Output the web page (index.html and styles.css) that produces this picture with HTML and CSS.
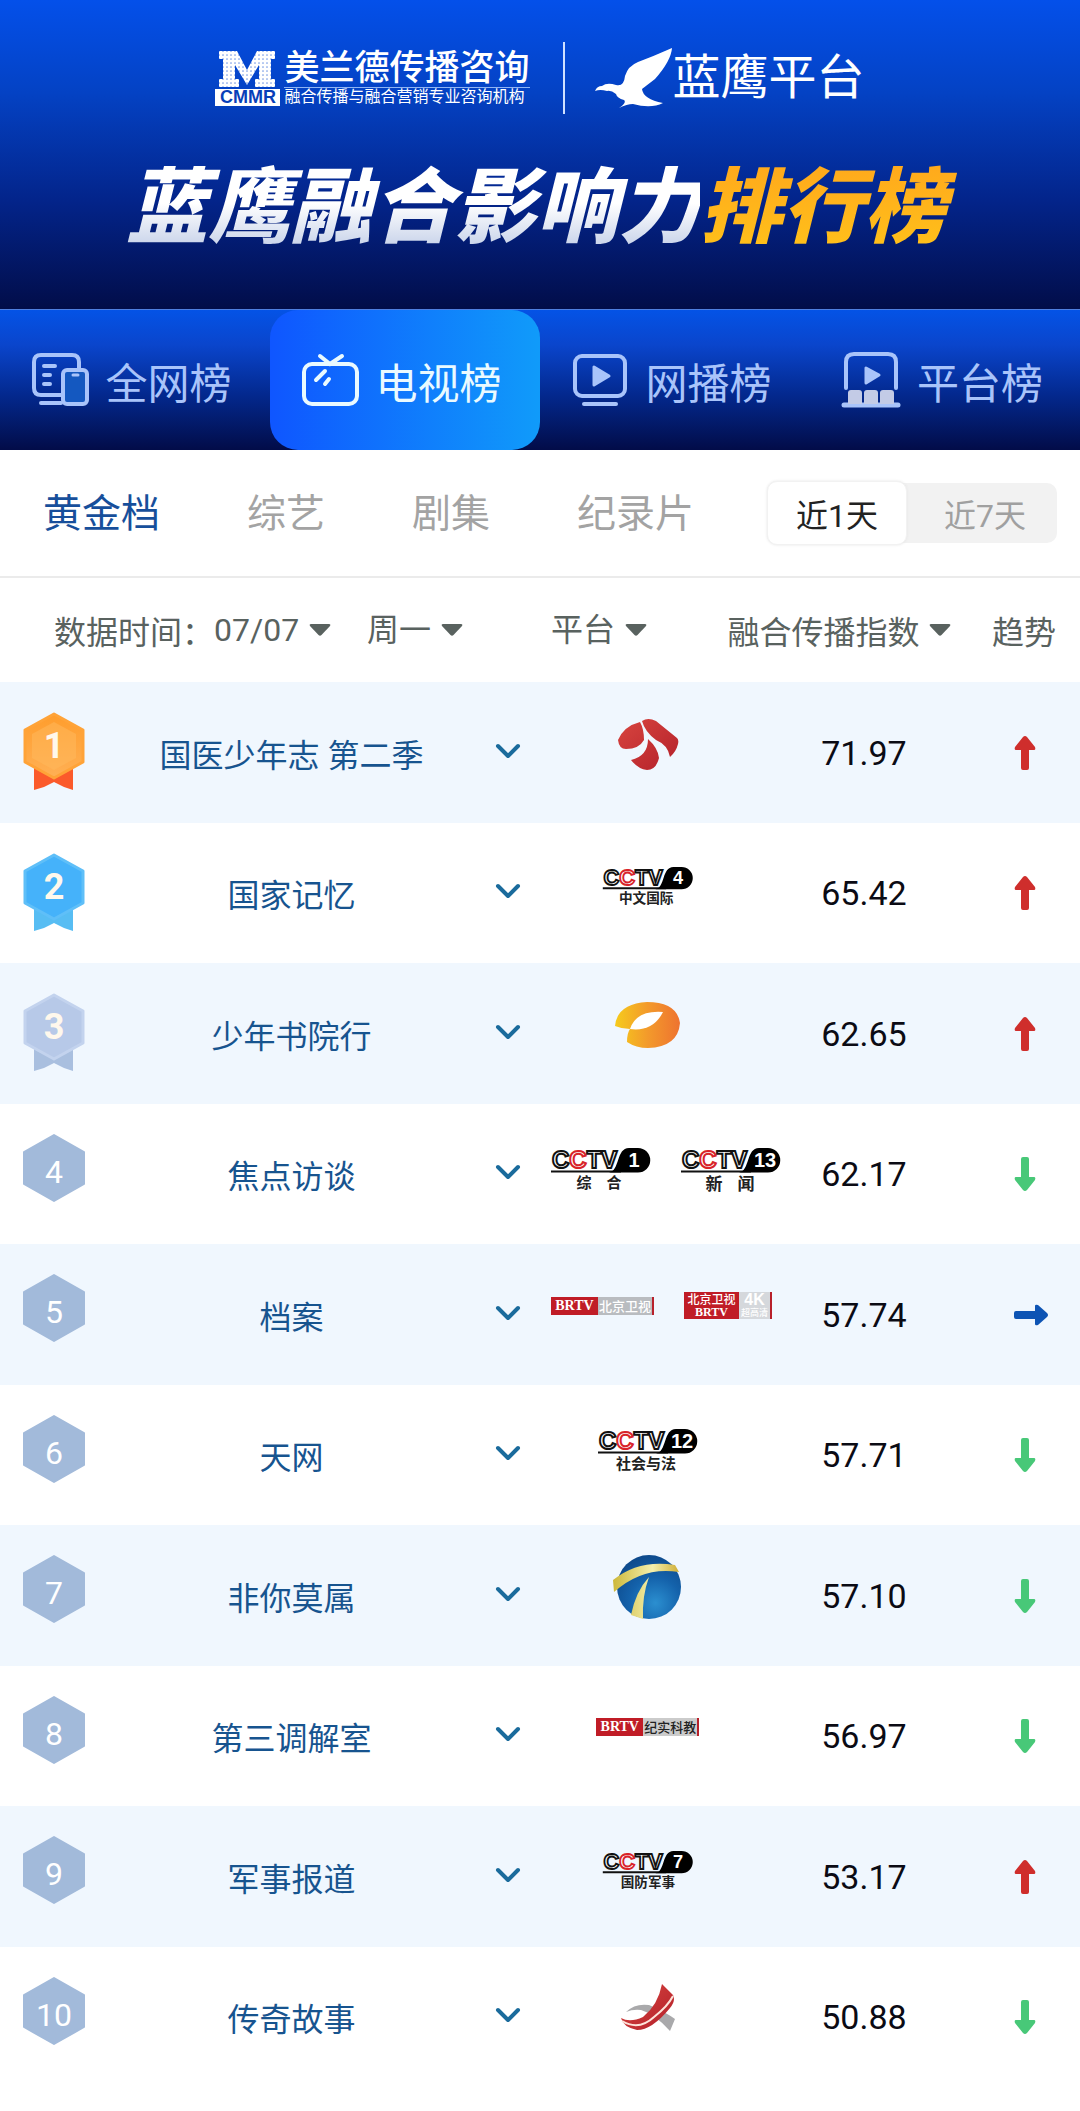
FILE: index.html
```html
<!DOCTYPE html>
<html lang="zh-CN">
<head>
  <meta charset="UTF-8"/>
  <title>蓝鹰融合影响力排行榜</title>
  <meta name="viewport" content="width=device-width,initial-scale=1"/>
  <link rel="stylesheet" href="styles.css">
</head>
<body>

  <!-- shared icons -->
  <svg class="defs" width="0" height="0" aria-hidden="true">
    <defs>
      <pattern id="dots" width="4" height="4" patternUnits="userSpaceOnUse">
        <circle cx="2" cy="2" r="2.200" fill="#fff"/>
      </pattern>
      <linearGradient id="gold" x1="0" y1="0" x2="0" y2="1"><stop offset="0" stop-color="#ff9d2c"/><stop offset="1" stop-color="#ffb055"/></linearGradient>
      <linearGradient id="red" x1="0" y1="0" x2="1" y2="1"><stop offset="0" stop-color="#d8453f"/><stop offset="1" stop-color="#b3202a"/></linearGradient>
      <linearGradient id="orange" x1="0" y1="0" x2="1" y2="0"><stop offset="0" stop-color="#f6cb1c"/><stop offset=".5" stop-color="#f39a2b"/><stop offset="1" stop-color="#ee7330"/></linearGradient>
      <radialGradient id="globe" cx=".6" cy=".75" r=".8"><stop offset="0" stop-color="#2b8fd0"/><stop offset=".5" stop-color="#1462ab"/><stop offset="1" stop-color="#0d4788"/></radialGradient>
      <linearGradient id="band" x1="0" y1="0" x2="1" y2="0"><stop offset="0" stop-color="#cdb83a"/><stop offset=".6" stop-color="#f4efac"/><stop offset="1" stop-color="#cfae36"/></linearGradient>
    </defs>
    <symbol id="caret" viewBox="0 0 22 14"><path d="M2 1h18q2 0 1 2l-8.500 9q-1.500 1.500-3 0L1 3Q0 1 2 1z" fill="currentColor"/></symbol>
    <symbol id="chevron" viewBox="0 0 26 16"><path d="M3 3l10 10L23 3" fill="none" stroke="currentColor" stroke-width="4" stroke-linecap="round" stroke-linejoin="round"/></symbol>
    <symbol id="arrow-up" viewBox="0 0 22 34"><path d="M11 0q1 0 2 1l8 10q1 3-1 3h-5v18q0 2-2 2H9q-2 0-2-2V14H2q-2 0-1-3L9 1q1-1 2-1z" fill="currentColor"/></symbol>
    <symbol id="arrow-down" viewBox="0 0 22 34"><path d="M11 34q1 0 2-1l8-10q1-3-1-3h-5V2q0-2-2-2H9Q7 0 7 2v18H2q-2 0-1 3l8 10q1 1 2 1z" fill="currentColor"/></symbol>
    <symbol id="hex" viewBox="0 0 62 68"><path d="M31 1L61 18v32L31 67 1 50V18z" fill="#a2bada" stroke="#a2bada" stroke-width="2" stroke-linejoin="round"/></symbol>
    <symbol id="plate" viewBox="0 0 100 28">
      <path d="M0 24.500h70" stroke="#111" stroke-width="2"/>
      <path d="M58 25.500C69 24 65 1 78 1h9a12 12 0 0 1 0 24.500z" fill="#000"/>
    </symbol>
  </svg>

  <header class="hero">
    <div class="brands">
      <div class="cmmr">
        <div class="cmmr-mark">
          <svg width="64" height="36" viewBox="0 0 64 36"><path d="M4 0h18l10 19L42 0h18v8h-4v20h4v8H40v-8h4V14L32 34 20 14v14h4v8H4v-8h4V8H4z" fill="url(#dots)"/></svg>
          <span class="cmmr-label">CMMR</span>
        </div>
        <div class="cmmr-text">
          <strong>美兰德传播咨询</strong>
          <small>融合传播与融合营销专业咨询机构</small>
        </div>
      </div>
      <div class="eagle">
        <svg width="78" height="60" viewBox="0 0 78 60"><path d="M77 0Q76 13 60 31L47 41q1 10 21 14Q56 61 38 56q-6 0-14 4 8-5 5-8-7-2-8-6-5-4-9-3-7-2-12 0 2-5 7-5 5-4 14-1 8 2 9-9Q33 18 43 14 59 8 77 0z" fill="#fff"/></svg>
        <span>蓝鹰平台</span>
      </div>
    </div>
    <h1><span class="title-main">蓝鹰融合影响力</span><span class="title-rank">排行榜</span></h1>
  </header>

  <nav class="tabs">
    <a href="#all">
      <svg width="57" height="54" viewBox="0 0 57 54" fill="none" stroke="currentColor" stroke-width="4" stroke-linecap="round"><path d="M29 42H9q-7 0-7-7V9q0-7 7-7h31q7 0 7 7v8M9 50h20M12 13h11M12 22h6M12 31h6"/><rect x="31" y="17" width="24" height="34" rx="4" fill="#1458c0"/><path d="M41 22h5" stroke-width="3"/></svg>
      全网榜
    </a>
    <a href="#tv" class="active">
      <svg width="57" height="54" viewBox="0 0 57 54" fill="none" stroke="currentColor" stroke-width="4" stroke-linecap="round"><rect x="2" y="11" width="53" height="40" rx="8"/><path d="M18 3l10 8L40 3M14 27l9-9M23 31l4-5"/></svg>
      电视榜
    </a>
    <a href="#web">
      <svg width="57" height="54" viewBox="0 0 57 54" fill="none" stroke="currentColor" stroke-width="4" stroke-linecap="round"><rect x="3" y="3" width="50" height="40" rx="7"/><path d="M12 51h32"/><path d="M22 14v18l15-9z" fill="currentColor" stroke-width="3" stroke-linejoin="round"/></svg>
      网播榜
    </a>
    <a href="#platform">
      <svg width="60" height="56" viewBox="0 0 60 56" fill="none" stroke="currentColor" stroke-width="4" stroke-linecap="round"><path d="M5 36V10q0-8 8-8h34q8 0 8 8v26"/><path d="M25 16v15l13-8z" fill="currentColor" stroke-width="3" stroke-linejoin="round"/><path d="M3 53h54" stroke-width="5"/><path d="M7 52V41q0-3 3-3h8q3 0 3 3v11zM23 52V41q0-3 3-3h8q3 0 3 3v11zM39 52V41q0-3 3-3h8q3 0 3 3v11z" fill="#c3cbe6" stroke="none"/></svg>
      平台榜
    </a>
  </nav>

  <div class="filters">
    <div class="cats">
      <a href="#prime" class="active">黄金档</a>
      <a href="#variety">综艺</a>
      <a href="#drama">剧集</a>
      <a href="#doc">纪录片</a>
    </div>
    <div class="range">
      <button type="button" class="active">近1天</button>
      <button type="button">近7天</button>
    </div>
  </div>

  <table class="rank">
    <colgroup>
      <col class="c-rank"><col class="c-name"><col class="c-more"><col class="c-plat"><col class="c-gap"><col class="c-score"><col>
    </colgroup>
    <thead>
      <tr>
        <th colspan="3">
          <div class="dates">
            <label for="day">数据时间：</label>
            <span class="pick"><select id="day"><option>07/07</option></select><svg><use href="#caret"/></svg></span>
            <span class="pick week"><select aria-label="星期"><option>周一</option></select><svg><use href="#caret"/></svg></span>
          </div>
        </th>
        <th class="th-plat"><span class="pick"><select aria-label="平台"><option>平台</option></select><svg><use href="#caret"/></svg></span></th>
        <th colspan="2" class="th-score"><button type="button" class="pick">融合传播指数<svg><use href="#caret"/></svg></button></th>
        <th class="th-trend">趋势</th>
      </tr>
    </thead>
    <tbody>
      <tr>
        <td class="pos"><svg width="62" height="80" viewBox="0 0 62 80"><path d="M11 54h39v24l-9-3-10-5-10 5-10 3z" fill="#fb5a2b"/><path d="M31 2l29 16v32L31 66 2 50V18z" fill="url(#gold)" stroke="#ffa338" stroke-width="3" stroke-linejoin="round"/><path d="M31 10l22 12v24L31 58 9 46V22z" fill="#ffb95e" opacity=".5"/><text x="31" y="46" class="medal">1</text></svg></td>
        <td><a href="#1">国医少年志 第二季</a></td>
        <td class="more"><button type="button" aria-label="展开"><svg><use href="#chevron"/></svg></button></td>
        <td colspan="2" class="plat"><div>
          <svg width="62" height="52" viewBox="0 0 62 52" fill="url(#red)"><path d="M23 4Q7 8 1 22q1 9 8 9 13 0 18-9Q27 11 23 4zM31 21q10 9 11 19-3 12-12 12-9-1-16-10Q31 38 31 21zM25 3q6-4 14 0l21 17q2 2 1 6-2 8-8 13-2-12-14-17Q28 14 25 3z"/></svg>
        </div></td>
        <td class="score">71.97</td>
        <td class="trend up"><svg><use href="#arrow-up"/></svg></td>
      </tr>
      <tr>
        <td class="pos"><svg width="62" height="80" viewBox="0 0 62 80"><path d="M11 54h39v24l-9-3-10-5-10 5-10 3z" fill="#57bdf3"/><path d="M31 2l29 16v32L31 66 2 50V18z" fill="#45b2fa" stroke="#5fbff8" stroke-width="3" stroke-linejoin="round"/><text x="31" y="46" class="medal">2</text></svg></td>
        <td><a href="#2">国家记忆</a></td>
        <td class="more"><button type="button" aria-label="展开"><svg><use href="#chevron"/></svg></button></td>
        <td colspan="2" class="plat"><div>
          <svg class="cctv short" viewBox="0 0 100 44"><text x="1" y="21" class="cc">C<tspan class="r">C</tspan>TV</text><use href="#plate" width="100" height="28"/><text x="83" y="20" class="ch">4</text><text x="48" y="41" class="sub">中文国际</text></svg>
        </div></td>
        <td class="score">65.42</td>
        <td class="trend up"><svg><use href="#arrow-up"/></svg></td>
      </tr>
      <tr>
        <td class="pos"><svg width="62" height="80" viewBox="0 0 62 80"><path d="M11 54h39v24l-9-3-10-5-10 5-10 3z" fill="#a9bfdf"/><path d="M31 2l29 16v32L31 66 2 50V18z" fill="#b7c9e8" stroke="#c3d3ee" stroke-width="3" stroke-linejoin="round"/><text x="31" y="46" class="medal">3</text></svg></td>
        <td><a href="#3">少年书院行</a></td>
        <td class="more"><button type="button" aria-label="展开"><svg><use href="#chevron"/></svg></button></td>
        <td colspan="2" class="plat"><div>
          <svg width="66" height="46" viewBox="0 0 66 46"><path d="M0 24Q2 2 32 0q30 0 33 21-2 24-32 25-12 0-21-6 0-9 3-13-8 0-15-3z" fill="url(#orange)"/><path d="M15 27Q21 8 48 10 38 30 15 27z" fill="#fff"/></svg>
        </div></td>
        <td class="score">62.65</td>
        <td class="trend up"><svg><use href="#arrow-up"/></svg></td>
      </tr>
      <tr>
        <td class="pos"><div class="badge"><svg><use href="#hex"/></svg><span>4</span></div></td>
        <td><a href="#4">焦点访谈</a></td>
        <td class="more"><button type="button" aria-label="展开"><svg><use href="#chevron"/></svg></button></td>
        <td colspan="2" class="plat pair"><div>
          <svg class="cctv" viewBox="0 0 100 44"><text x="1" y="21" class="cc">C<tspan class="r">C</tspan>TV</text><use href="#plate" width="100" height="28"/><text x="83" y="20" class="ch">1</text><text x="33" y="41" class="sub">综</text><text x="63" y="41" class="sub">合</text></svg>
          <svg class="cctv tall" viewBox="0 0 100 50"><text x="1" y="21" class="cc">C<tspan class="r">C</tspan>TV</text><use href="#plate" width="100" height="28"/><text x="84" y="20" class="ch">13</text><text x="33" y="43" class="sub big">新</text><text x="65" y="43" class="sub big">闻</text></svg>
        </div></td>
        <td class="score">62.17</td>
        <td class="trend down"><svg><use href="#arrow-down"/></svg></td>
      </tr>
      <tr>
        <td class="pos"><div class="badge"><svg><use href="#hex"/></svg><span>5</span></div></td>
        <td><a href="#5">档案</a></td>
        <td class="more"><button type="button" aria-label="展开"><svg><use href="#chevron"/></svg></button></td>
        <td colspan="2" class="plat pair"><div>
          <span class="brtv pale"><b>BRTV</b><i>北京卫视</i></span>
          <span class="brtv pale uhd"><b><em>北京卫视</em>BRTV</b><i>4K<small>超高清</small></i></span>
        </div></td>
        <td class="score">57.74</td>
        <td class="trend flat"><svg viewBox="0 0 34 22"><path d="M34 11q0-1-1-2L24 1q-3-1-3 1v5H2Q0 7 0 9v4q0 2 2 2h19v5q0 2 3 1l9-8q1-1 1-2z" fill="currentColor"/></svg></td>
      </tr>
      <tr>
        <td class="pos"><div class="badge"><svg><use href="#hex"/></svg><span>6</span></div></td>
        <td><a href="#6">天网</a></td>
        <td class="more"><button type="button" aria-label="展开"><svg><use href="#chevron"/></svg></button></td>
        <td colspan="2" class="plat"><div>
          <svg class="cctv" viewBox="0 0 100 44"><text x="1" y="21" class="cc">C<tspan class="r">C</tspan>TV</text><use href="#plate" width="100" height="28"/><text x="84" y="20" class="ch">12</text><text x="48" y="41" class="sub">社会与法</text></svg>
        </div></td>
        <td class="score">57.71</td>
        <td class="trend down"><svg><use href="#arrow-down"/></svg></td>
      </tr>
      <tr>
        <td class="pos"><div class="badge"><svg><use href="#hex"/></svg><span>7</span></div></td>
        <td><a href="#7">非你莫属</a></td>
        <td class="more"><button type="button" aria-label="展开"><svg><use href="#chevron"/></svg></button></td>
        <td colspan="2" class="plat"><div>
          <svg width="70" height="66" viewBox="0 0 70 66"><circle cx="36" cy="33" r="32" fill="url(#globe)"/><path d="M0 26Q26 5 62 11l4 7Q30 12 1 38zM36 23Q29 42 30 65l-12-4Q23 37 36 23z" fill="url(#band)"/></svg>
        </div></td>
        <td class="score">57.10</td>
        <td class="trend down"><svg><use href="#arrow-down"/></svg></td>
      </tr>
      <tr>
        <td class="pos"><div class="badge"><svg><use href="#hex"/></svg><span>8</span></div></td>
        <td><a href="#8">第三调解室</a></td>
        <td class="more"><button type="button" aria-label="展开"><svg><use href="#chevron"/></svg></button></td>
        <td colspan="2" class="plat"><div>
          <span class="brtv"><b>BRTV</b><i>纪实科教</i></span>
        </div></td>
        <td class="score">56.97</td>
        <td class="trend down"><svg><use href="#arrow-down"/></svg></td>
      </tr>
      <tr>
        <td class="pos"><div class="badge"><svg><use href="#hex"/></svg><span>9</span></div></td>
        <td><a href="#9">军事报道</a></td>
        <td class="more"><button type="button" aria-label="展开"><svg><use href="#chevron"/></svg></button></td>
        <td colspan="2" class="plat"><div>
          <svg class="cctv short" viewBox="0 0 100 44"><text x="1" y="21" class="cc">C<tspan class="r">C</tspan>TV</text><use href="#plate" width="100" height="28"/><text x="83" y="20" class="ch">7</text><text x="50" y="41" class="sub">国防军事</text></svg>
        </div></td>
        <td class="score">53.17</td>
        <td class="trend up"><svg><use href="#arrow-up"/></svg></td>
      </tr>
      <tr>
        <td class="pos"><div class="badge"><svg><use href="#hex"/></svg><span>10</span></div></td>
        <td><a href="#10">传奇故事</a></td>
        <td class="more"><button type="button" aria-label="展开"><svg><use href="#chevron"/></svg></button></td>
        <td colspan="2" class="plat"><div>
          <svg width="54" height="48" viewBox="0 0 54 48"><path d="M5 28Q14 19 28 21q18 8 26 14l-5 12Q34 30 20 26 12 25 5 28z" fill="#a9a9ab"/><path d="M41 0l11 11q3 6-3 13Q31 46 16 46 2 43 0 34q9 5 22-1Q37 21 41 0z" fill="url(#red)"/><path d="M1 37q17 10 32-4Q47 22 52 12" fill="none" stroke="#fde3da" stroke-width="2"/></svg>
        </div></td>
        <td class="score">50.88</td>
        <td class="trend down"><svg><use href="#arrow-down"/></svg></td>
      </tr>
    </tbody>
  </table>

</body>
</html>
```
FILE: styles.css
```css
*{box-sizing:border-box;}
body{margin:0;background:#fff;color:#0b0b14;font-family:Roboto,"Noto Sans CJK SC",sans-serif;font-size:32px;}
a{color:inherit;text-decoration:none;}
button,select{font:inherit;color:inherit;background:none;border:none;padding:0;margin:0;cursor:pointer;}
select{appearance:none;}
svg{display:block;flex:none;}
.defs{position:absolute;}

/* hero */
.hero{background:linear-gradient(#0450ea 0%,#0442c4 30%,#03248a 65%,#020d49 100%);color:#fff;padding:42px 0 53px;}
.brands{display:flex;justify-content:center;align-items:center;height:72px;}
.cmmr{display:flex;gap:4px;padding-right:33px;}
.cmmr-mark{display:flex;flex-direction:column;gap:2px;width:65px;}
.cmmr-label{background:#fff;color:#0840b8;font:700 18px/17px "Liberation Sans",sans-serif;text-align:center;}
.cmmr-text{display:flex;flex-direction:column;}
.cmmr-text strong{font-size:35px;line-height:36px;font-weight:500;border-bottom:1px solid #8fb4f4;}
.cmmr-text small{font-size:16px;line-height:18px;}
.eagle{display:flex;align-items:center;height:72px;padding-left:30px;border-left:2px solid #cfe0ff;}
.eagle span{font-size:48px;line-height:60px;font-weight:400;}
h1{margin:46px 0 0;padding-right:8px;font-size:82px;line-height:96px;font-weight:900;font-style:italic;text-align:center;white-space:nowrap;}
.title-main,.title-rank{background:linear-gradient(#fff 45%,#c8d3ea 90%);-webkit-background-clip:text;background-clip:text;color:transparent;}
.title-rank{background-image:linear-gradient(#ffa81c,#ffc21a);padding-right:12px;margin-right:-12px;}

/* tabs */
.tabs{display:grid;grid-template-columns:repeat(4,1fr);border-top:1px solid #4f7fe0;background:linear-gradient(#0453e6 0%,#0a45cc 25%,#03298f 60%,#020c48 100%);color:#a9c4fa;}
.tabs a{display:flex;align-items:center;justify-content:center;gap:16px;height:140px;padding-right:6px;font-size:42px;}
.tabs .active{background:linear-gradient(90deg,#0f56ff,#109bfa);color:#eafaff;border-radius:28px;}

/* category filters */
.filters{display:flex;justify-content:space-between;align-items:center;height:128px;padding:0 23px 0 43px;border-bottom:2px solid #ebebeb;}
.cats{display:flex;gap:87px;padding-bottom:6px;font-size:39px;color:#a3a3a3;}
.cats .active{color:#174f9b;}
.range{display:flex;align-items:center;background:#f2f2f2;border-radius:10px;height:60px;}
.range button{width:150px;padding-left:6px;color:#a0a0a0;}
.range .active{width:140px;height:64px;padding:0;background:#fff;border:1px solid #f2f2f2;border-radius:10px;color:#222;box-shadow:0 0 3px #e4e4e4;}

/* ranking table */
.rank{width:100%;border-collapse:collapse;table-layout:fixed;text-align:center;}
.c-rank{width:10%;}
.c-name{width:34%;}
.c-more{width:6%;}
.c-plat{width:17%;}
.c-gap{width:5%;}
.c-score{width:16%;}
th{height:104px;padding:0;font-weight:400;color:#59625f;text-align:left;white-space:nowrap;}
td{height:140px;padding:0;}
.dates{display:flex;align-items:center;padding-left:54px;}
.pick{display:inline-flex;align-items:center;gap:9px;}
.pick svg{width:22px;height:14px;}
.week{margin-left:36px;}
.th-plat{padding-left:11px;}
.th-score{padding-left:4px;}
th.th-trend{padding-right:24px;text-align:right;}
tbody tr:nth-child(odd){background:#f0f7fe;}
tbody tr:nth-child(odd) td{height:141px;}
tbody a{color:#17548f;}
.pos{padding:30px 0 0 23px;vertical-align:top;}
.badge{display:grid;width:62px;height:68px;}
.badge svg,.badge span{grid-area:1/1;width:62px;height:68px;}
.badge span{color:#fff;line-height:76px;}
.medal{font:700 36px Roboto,sans-serif;fill:#fff8ec;text-anchor:middle;}
.more button{display:block;margin:0 auto;padding-bottom:4px;color:#1a6b9c;}
.more svg{width:26px;height:16px;}
.plat div{display:flex;align-items:center;justify-content:center;padding:0 22px 18px 0;}
.plat.pair div{justify-content:flex-start;gap:30px;padding:0 0 18px 11px;}
.cctv{width:100px;height:44px;margin-top:8px;overflow:visible;}
.cctv.short{width:92px;height:40px;margin-top:4px;}
.cctv.tall{height:50px;margin-top:14px;}
.cc{font:700 24px "Liberation Sans",sans-serif;fill:#fff;stroke:#111;stroke-width:2px;}
.cc .r{stroke:#d8232a;}
.ch{font:700 20px "Liberation Sans",sans-serif;fill:#fff;text-anchor:middle;}
.sub{font:700 15px "Noto Sans CJK SC",sans-serif;fill:#222;text-anchor:middle;}
.sub.big{font-size:17px;}
.brtv{display:flex;height:18px;border-right:2px solid #b8202a;background:#cbcbcb;}
.brtv b{width:47px;background:#c01c26;color:#fff;font:700 14px/18px "Liberation Serif",serif;}
.brtv i{width:54px;color:#222;font:500 13px/18px "Noto Sans CJK SC",sans-serif;}
.brtv.pale i{background:#b9bcc0;color:#fff;}
.brtv.uhd{height:27px;}
.brtv.uhd b{width:55px;font-size:12px;line-height:12px;}
.brtv.uhd em{display:block;font:500 12px/14px "Noto Sans CJK SC",sans-serif;}
.brtv.uhd i{width:31px;background:#d5d8dc;font:700 16px/15px "Liberation Sans",sans-serif;}
.brtv.uhd small{display:block;font:500 9px/11px "Noto Sans CJK SC",sans-serif;}
.score{font-size:34px;}
.trend{padding-left:64px;}
.trend svg{width:22px;height:34px;}
.trend.flat svg{width:34px;height:22px;}
.up{color:#cf2e2c;}
.down{color:#48c878;}
.flat{color:#0d54b4;}
```
